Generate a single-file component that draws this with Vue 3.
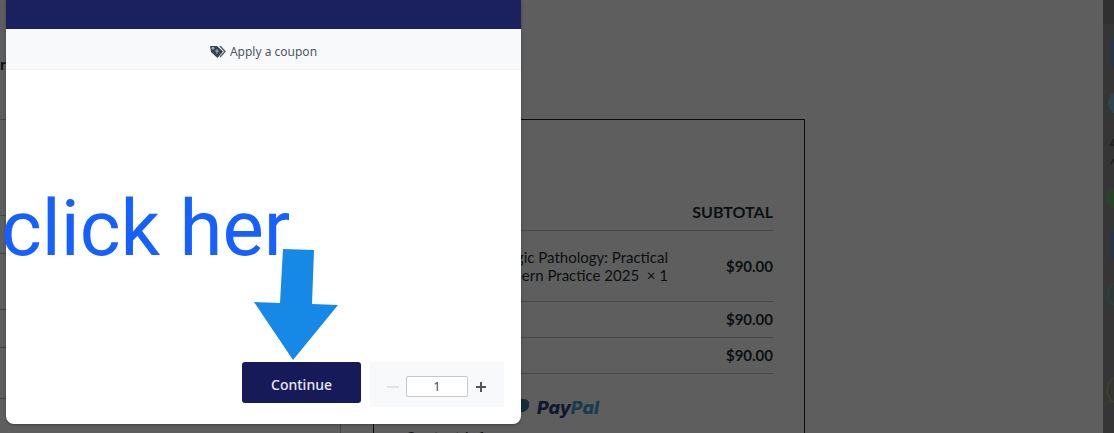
<template>
  <div class="checkout">
    <section class="billing">
      <h2 class="billing-title">r</h2>
      <div class="billing-rows">
        <div v-for="(size, i) in billingRows" :key="i" class="billing-row" :class="size"></div>
      </div>
    </section>

    <section class="order">
      <table class="order-table">
        <thead>
          <tr>
            <th></th>
            <th class="amount" scope="col">SUBTOTAL</th>
          </tr>
        </thead>
        <tbody>
          <tr class="item">
            <td class="product">gic Pathology: Practical<br>dern Practice 2025 &nbsp;× 1</td>
            <td class="amount">$90.00</td>
          </tr>
          <tr v-for="row in totals" :key="row.id">
            <td></td>
            <td class="amount">{{ row.value }}</td>
          </tr>
        </tbody>
      </table>
      <div class="paypal">
        <svg class="paypal-mark" viewBox="0 0 16 18" aria-hidden="true">
          <path d="M3 0h8c4 0 6 3 5 7s-4 6-8 6H6l-1 4H0z" fill="#142c3c" />
        </svg>
        <span class="paypal-name"><span class="pay">Pay</span><span class="pal">Pal</span></span>
      </div>
      <p class="contact">Contact Info</p>
    </section>

    <aside class="rail">
      <svg class="rail-icons" viewBox="0 0 11 433" aria-hidden="true">
        <path d="M0 0h11v24H0z" fill="#303030" />
        <rect x="7" y="40" width="12" height="27" rx="2" fill="#263647" />
        <circle cx="17" cy="103" r="12" fill="#294651" />
        <path d="M11 139l-3 6h3M11 159l-3 5" stroke="#202326" stroke-width="2" fill="none" />
        <circle cx="13" cy="198" r="11" fill="#2b422a" />
        <rect x="7" y="232" width="12" height="28" rx="2" fill="#263647" />
        <circle cx="17" cy="294" r="12" fill="none" stroke="#284240" stroke-width="2" />
        <circle cx="18" cy="390" r="14" fill="none" stroke="#3c4228" stroke-width="2" />
      </svg>
    </aside>

    <div class="modal" role="dialog" aria-label="Cart">
      <div class="modal-header"></div>
      <button class="coupon" type="button">
        <svg class="coupon-icon" viewBox="0 0 16 13" aria-hidden="true">
          <path d="M9 1h2l5 5.500-5.500 6-1-1 4.500-5z" fill="#52616c" />
          <path d="M0 1h7l6 5.500L7.500 13 1 7z" fill="#34434f" />
          <path d="M2 2.500h2v1.500H2zM7 4v5M5 6h4" stroke="#9eabb4" fill="#9eabb4" />
        </svg>
        Apply a coupon
      </button>
      <div class="modal-content"></div>
      <div class="modal-footer">
        <button class="continue" type="button">Continue</button>
        <div class="quantity">
          <button class="step" type="button" aria-label="Decrease quantity" :disabled="quantity <= 1" @click="quantity--">
            <svg viewBox="0 0 12 12" aria-hidden="true"><path d="M0 6h12" stroke="#c9ccd0" /></svg>
          </button>
          <input v-model.number="quantity" class="quantity-input" type="text" aria-label="Quantity">
          <button class="step" type="button" aria-label="Increase quantity" @click="quantity++">
            <svg viewBox="0 0 12 12" aria-hidden="true"><path d="M1 6h10M6 1v10" stroke="#555" stroke-width="2" /></svg>
          </button>
        </div>
      </div>
    </div>

    <div class="hint">click her</div>
    <svg class="arrow" viewBox="0 0 84 112" aria-hidden="true">
      <path d="M29 0l31 1-2 54 26 1-45 55L0 53l26 1z" fill="#1688e5" />
    </svg>
  </div>
</template>

<script setup>
import { ref } from 'vue'

const quantity = ref(1)

const billingRows = ['tall', 'short', 'medium', 'short', 'regular', 'short']

const totals = [
  { id: 'subtotal', value: '$90.00' },
  { id: 'total', value: '$90.00' }
]
</script>

<style>
body {
  background-color: #5e5e5e;
  overflow: hidden;
}
</style>

<style scoped>
.checkout {
  position: relative;
  display: grid;
  grid-template-columns: 341px 432px 1fr 11px;
  min-height: 100vh;
  font-family: Lato, sans-serif;
  color: #0c1012;
  overflow: hidden;
}

.checkout * {
  box-sizing: border-box;
}

/* Billing */
.billing {
  border-right: 1px solid #444;
}

.billing-title {
  margin: 0;
  padding-top: 54px;
  height: 119px;
  font-size: 16px;
  line-height: 20px;
}

.billing-row {
  border-top: 1px solid #434343;
}

.billing-row.tall {
  height: 96px;
}

.billing-row.short {
  height: 38px;
}

.billing-row.medium {
  height: 56px;
}

.billing-row.regular {
  height: 51px;
}

.billing-row:last-child {
  height: 35px;
}

/* Order */
.order {
  margin: 119px -32px 0 32px;
  padding: 74px 31px 0;
  height: calc(100vh - 119px);
  overflow: hidden;
  border: 1px solid #080c16;
  border-bottom: none;
}

.order-table {
  width: 100%;
  border-collapse: collapse;
  font-size: 15px;
  line-height: 18px;
}

.order-table th,
.order-table td {
  padding: 8px 0;
  border-bottom: 1px solid #494949;
}

.order-table tr {
  height: 36px;
}

.order-table .item {
  height: 71px;
}

.order-table .amount {
  width: 105px;
  text-align: right;
  font-weight: 700;
}

.order-table th.amount {
  font-size: 16px;
}

.order-table .product {
  text-align: right;
  white-space: nowrap;
}

.paypal {
  display: flex;
  align-items: center;
  gap: 8px;
  height: 54px;
  padding: 14px 0 0 108px;
}

.paypal-mark {
  width: 16px;
  height: 18px;
}

.paypal-name {
  font-family: Inter, sans-serif;
  font-size: 18px;
  line-height: 20px;
  font-weight: 800;
  font-style: italic;
}

.pay {
  color: #10182f;
}

.pal {
  color: #183c4a;
}

.contact {
  margin: 0;
  font-size: 16px;
  line-height: 18px;
}

/* Rail */
.rail {
  grid-column: 4;
  background-color: #353535;
}

.rail-icons {
  display: block;
  width: 11px;
}

/* Modal */
.modal {
  position: absolute;
  top: 0;
  left: 6px;
  width: 515px;
  height: 424px;
  display: flex;
  flex-direction: column;
  background-color: #fff;
  border-radius: 0 0 8px 8px;
  box-shadow: 0 1px 3px rgba(0, 0, 0, 0.3);
}

.modal-header {
  height: 29px;
  background-color: #1b205f;
}

.coupon {
  display: flex;
  align-items: center;
  justify-content: center;
  gap: 4px;
  height: 41px;
  padding: 4px 0 0;
  border: none;
  border-bottom: 1px solid #f0f1f3;
  background-color: #f8f9fb;
  font-family: "Noto Sans", sans-serif;
  font-size: 12px;
  color: #4c5764;
}

.coupon-icon {
  width: 16px;
  height: 13px;
}

.modal-content {
  flex: 1;
}

.modal-footer {
  display: flex;
  justify-content: flex-end;
  gap: 9px;
  padding: 0 17px 17px;
}

.continue {
  width: 119px;
  height: 41px;
  padding-top: 4px;
  border: none;
  border-radius: 3px;
  background-color: #171a59;
  color: #e8e8f7;
  font-family: "Noto Sans", sans-serif;
  font-size: 14px;
  font-weight: 500;
}

.quantity {
  display: flex;
  align-items: center;
  justify-content: center;
  gap: 7px;
  width: 134px;
  height: 45px;
  padding-top: 4px;
  background-color: #f8f9fb;
}

.quantity-input {
  width: 62px;
  height: 21px;
  padding: 0;
  border: 1px solid #c6c8cc;
  border-radius: 2px;
  background-color: #fff;
  text-align: center;
  font-family: "Noto Sans", sans-serif;
  font-size: 12px;
  color: #444;
}

.step {
  display: flex;
  padding: 0;
  border: none;
  background: none;
}

.step svg {
  width: 12px;
  height: 12px;
}

/* Annotation */
.hint {
  position: absolute;
  top: 183px;
  left: 1px;
  font-family: Roboto, sans-serif;
  font-size: 78px;
  line-height: 92px;
  white-space: nowrap;
  color: #1560ff;
}

.arrow {
  position: absolute;
  top: 249px;
  left: 254px;
  width: 84px;
  height: 112px;
}
</style>
